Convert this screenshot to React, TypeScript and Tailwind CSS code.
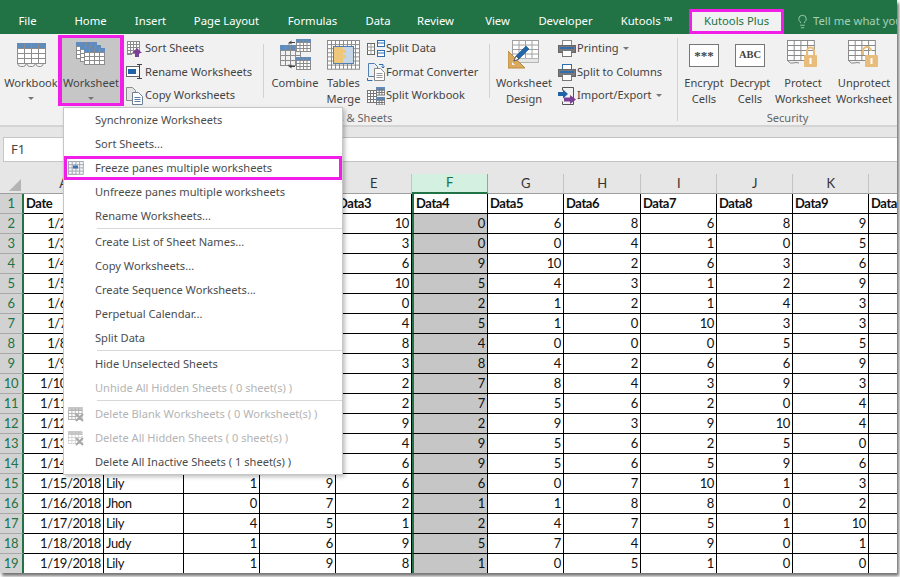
import type { ReactNode } from "react";
import { Lightbulb } from "lucide-react";

const BLUE = "#5f8bbd";
const GRID = "#8c8c8c";

// small table drawing used by most ribbon icons
function Tbl({ x, y, cw, rh, c, r, head = BLUE, line = GRID, fill = "#fff" }: {
  x: number; y: number; cw: number; rh: number; c: number; r: number; head?: string; line?: string; fill?: string;
}) {
  const w = cw * c;
  const h = rh * r;
  const parts: ReactNode[] = [];
  for (let i = 1; i < c; i++) parts.push(<path key={"c" + i} d={`M${x + i * cw} ${y}v${h}`} />);
  for (let i = 1; i < r; i++) parts.push(<path key={"r" + i} d={`M${x} ${y + i * rh}h${w}`} />);
  return (
    <g stroke={line} strokeWidth="1" fill="none">
      <rect x={x} y={y} width={w} height={h} fill={fill} />
      {head !== "none" && <rect x={x} y={y} width={w} height={rh} fill={head} stroke={head} />}
      {parts}
    </g>
  );
}

function WorkbookIcon() {
  return (
    <svg width="31" height="26" viewBox="0 0 31 26">
      <Tbl x={1.5} y={1.5} cw={7} rh={5} c={4} r={4} />
      <path d="M1.5 21.5q1 3 3 3h3q2 0 3-3q1 3 3 3h3q2 0 3-3q1 3 3 3h2q2 0 3-3" stroke={GRID} fill="none" />
    </svg>
  );
}
function WorksheetIcon() {
  return (
    <svg width="31" height="26" viewBox="0 0 31 26">
      <Tbl x={0.5} y={0.5} cw={5} rh={4} c={4} r={4} />
      <Tbl x={4.5} y={3.5} cw={5} rh={4} c={4} r={4} />
      <Tbl x={8.5} y={6.5} cw={5} rh={4} c={4} r={4} />
    </svg>
  );
}
function SortIcon() {
  return (
    <svg width="18" height="18" viewBox="0 0 18 18">
      <Tbl x={1.5} y={1.5} cw={3} rh={3} c={4} r={4} head="none" />
      <path d="M1 14.5h5" stroke={GRID} />
      <path d="M11 8l5 5h-3v4h-4v-4H6z" fill="#7b3f98" />
    </svg>
  );
}
function RenameIcon() {
  return (
    <svg width="18" height="16" viewBox="0 0 18 16">
      <rect x="0.5" y="2.5" width="13" height="10" fill="#fff" stroke="#666" />
      <rect x="2" y="5" width="8" height="5" fill="#1f62a8" />
      <path d="M11 .5h5M11 14.5h5M13.5 .5v14" stroke="#444" fill="none" />
    </svg>
  );
}
function CopyIcon() {
  return (
    <svg width="17" height="18" viewBox="0 0 17 18">
      <path d="M.5.5h6l3 3v10h-9z" fill="#e4e4e4" stroke="#8a8a8a" />
      <path d="M6.5 5.5h6l4 4v8h-10z" fill="#fff" stroke="#6f7f93" />
      <path d="M8.5 10.5h6M8.5 12.5h6M8.5 14.5h6" stroke="#5b7ea8" />
    </svg>
  );
}
function CombineIcon() {
  return (
    <svg width="31" height="32" viewBox="0 0 31 32">
      <Tbl x={0.5} y={6.5} cw={5} rh={5} c={4} r={4} fill="#f1f1f1" />
      <Tbl x={16.5} y={0.5} cw={3.5} rh={3} c={4} r={4} />
      <Tbl x={16.5} y={18.5} cw={3.5} rh={3} c={4} r={4} />
      <path d="M15 3.5H9v2M15 27.5H9v-2" stroke="#444" fill="none" />
      <path d="M9 3.5l2.5-2v4zM9 27.5l2.5-2v4z" fill="#444" />
    </svg>
  );
}
function MergeIcon() {
  return (
    <svg width="33" height="30" viewBox="0 0 33 30">
      <Tbl x={0.5} y={0.5} cw={4} rh={4.1} c={8} r={7} head="none" />
      <rect x="6.5" y="6.5" width="20" height="17" fill="#c4d6e8" stroke="#4f7fb5" />
      <path d="M7 7h9v3h3v3h-3v2h3v3h-3v5H7z" fill="#eec77a" />
    </svg>
  );
}
function SplitDataIcon() {
  return (
    <svg width="18" height="18" viewBox="0 0 18 18">
      <rect x=".5" y="3.5" width="7" height="11" fill="#fff" stroke="#666" />
      <path d="M.5 7h7M.5 10.5h7M4 3.5v11" stroke="#999" />
      <rect x="10.5" y=".5" width="7" height="6" fill="#fff" stroke="#2f6fb0" />
      <rect x="10.5" y="10.5" width="7" height="6" fill="#fff" stroke="#2f6fb0" />
      <path d="M10.5 3h7M10.5 13h7" stroke="#2f6fb0" />
    </svg>
  );
}
function FormatIcon() {
  return (
    <svg width="18" height="18" viewBox="0 0 18 18">
      <path d="M1.5 .5h6l3 3v10h-9z" fill="#e9eef5" stroke="#4f7fb5" />
      <path d="M7.5 5.5h6l4 4v8h-10z" fill="#fff" stroke="#888" />
      <path d="M9.5 10.5h6M9.5 12.5h6M9.5 14.5h6" stroke="#999" />
      <path d="M12 1.5h4v3M14.5 3.5l1.5 1.5 1.5-1.5M.5 15v2.5h5" stroke="#2f6fb0" fill="none" />
    </svg>
  );
}
function SplitBookIcon() {
  return (
    <svg width="18" height="18" viewBox="0 0 18 18">
      <Tbl x={.5} y={3.5} cw={3} rh={3} c={3} r={4} head="none" line="#777" />
      <Tbl x={9.5} y={.5} cw={2.7} rh={2.5} c={3} r={3} line="#777" />
      <Tbl x={9.5} y={10.5} cw={2.7} rh={2.5} c={3} r={3} line="#777" />
    </svg>
  );
}
function DesignIcon() {
  return (
    <svg width="33" height="30" viewBox="0 0 33 30">
      <Tbl x={4.5} y={0.5} cw={6.5} rh={4.5} c={4} r={4} head="none" line="#a0a0a0" />
      <path d="M4.5 18.5h26v4h-20" fill="#e6e6e6" stroke="#b5b5b5" />
      <path d="M0 11v17h17z" fill="#dba95e" stroke="#b98a3d" />
      <path d="M4 22v3h3z" fill="#f1f1f1" />
      <path d="M6 21l2-5L18 6l3 3-10 10z" fill="#2368ad" stroke="#174d85" strokeWidth=".6" />
      <path d="M6 21l2-5 3 3z" fill="#fff" stroke="#333" strokeWidth=".6" />
    </svg>
  );
}
function PrinterIcon({ top = "#888" }: { top?: string }) {
  return (
    <svg width="18" height="17" viewBox="0 0 18 17">
      <rect x="4.5" y=".5" width="9" height="5" fill="#fff" stroke={top} />
      <rect x=".5" y="5.5" width="17" height="7" fill="#7a7a7a" stroke="#666" />
      <rect x="2" y="7" width="14" height="2" fill="#2f6fb0" />
      <rect x="4.5" y="10.5" width="9" height="6" fill="#fff" stroke="#777" />
    </svg>
  );
}
function ImportIcon() {
  return (
    <svg width="18" height="18" viewBox="0 0 18 18">
      <path d="M4.5 3.5V.5h11v17h-11v-3" stroke="#555" fill="none" />
      <path d="M0 5h5V2.5L10 7l-5 4.5V9H0z" fill="#1f62a8" />
      <path d="M6 10.5h6V8l6 4.5-6 4.5v-2.5H6z" fill="#7b3f98" />
    </svg>
  );
}
function LockSheetIcon({ open }: { open?: boolean }) {
  return (
    <svg width="32" height="30" viewBox="0 0 32 30">
      <Tbl x={0.5} y={0.5} cw={6.7} rh={5} c={4} r={4} head="none" line="#8a8a8a" />
      <path d="M1 21q2 3 5 2t6 0" stroke="#8a8a8a" fill="none" />
      <rect x="17" y="15" width="13" height="12" rx="1" fill="#e8bd7c" />
      <path d={open ? "M15 15v-4a4 4 0 0 1 8 0" : "M20 15v-4a3.5 3.5 0 0 1 7 0v4"} stroke="#e8bd7c" strokeWidth="2" fill="none" />
      <rect x="22.5" y="18" width="2" height="6" fill="#fff" />
    </svg>
  );
}
function FreezeIcon() {
  return (
    <svg width="16" height="15" viewBox="0 0 16 15">
      <Tbl x={.5} y={.5} cw={3.7} rh={3.2} c={4} r={4} head="none" line="#a3a9b2" fill="#f4f6f9" />
      <rect x="5" y="4.5" width="5" height="3" fill="#3b73b5" />
      <path d="M1 13.5h8" stroke="#aaa" />
    </svg>
  );
}
function DeleteSheetIcon({ dotted }: { dotted?: boolean }) {
  return (
    <svg width="16" height="15" viewBox="0 0 16 15">
      <g strokeDasharray={dotted ? "1 1" : undefined}>
        <Tbl x={.5} y={.5} cw={3.4} rh={3} c={4} r={4} head="#c9c9c9" line="#b5b5b5" />
      </g>
      <path d="M8 7l7 7M15 7l-7 7" stroke="#a8a8a8" strokeWidth="2" />
    </svg>
  );
}

function LargeBtn({ w, icon, lines, caret }: { w: string; icon: ReactNode; lines: string[]; caret?: boolean }) {
  return (
    <div className={`flex ${w} shrink-0 flex-col items-center`}>
      <div className="flex h-[40px] items-center justify-center">{icon}</div>
      {lines.map((l) => (
        <span key={l} className="whitespace-nowrap text-[11.1px] leading-[16px]">{l}</span>
      ))}
      {caret && <span className="mt-[6px] h-0 w-0 border-x-[3px] border-t-[3px] border-x-transparent border-t-[#777]" />}
    </div>
  );
}

function SmallBtn({ icon, label, caret, iw }: { icon: ReactNode; label: string; caret?: boolean; iw: string }) {
  return (
    <div className="flex h-[23.5px] items-center whitespace-nowrap text-[11.1px]">
      <div className={`flex ${iw} shrink-0 items-center`}>{icon}</div>
      <span>{label}</span>
      {caret && <span className="ml-[4px] h-0 w-0 border-x-[3px] border-t-[3px] border-x-transparent border-t-[#777]" />}
    </div>
  );
}

const tabs = [
  { t: "File", c: "w-[61px] pr-[6px]" },
  { t: "Home", c: "w-[59px]" },
  { t: "Insert", c: "w-[61px]" },
  { t: "Page Layout", c: "w-[91px]" },
  { t: "Formulas", c: "w-[81px]" },
  { t: "Data", c: "w-[50px]" },
  { t: "Review", c: "w-[65px]" },
  { t: "View", c: "w-[59px]" },
  { t: "Developer", c: "w-[77px]" },
  { t: "Kutools ™", c: "w-[85px]" },
];

const menu: (string | { t: string; off?: boolean; icon?: ReactNode; hl?: boolean })[] = [
  { t: "Synchronize Worksheets" },
  { t: "Sort Sheets..." },
  { t: "Freeze panes multiple worksheets", icon: <FreezeIcon />, hl: true },
  { t: "Unfreeze panes multiple worksheets" },
  { t: "Rename Worksheets..." },
  "sep",
  { t: "Create List of Sheet Names..." },
  { t: "Copy Worksheets..." },
  { t: "Create Sequence Worksheets..." },
  { t: "Perpetual Calendar..." },
  { t: "Split Data" },
  "sep",
  { t: "Hide Unselected Sheets" },
  { t: "Unhide All Hidden Sheets ( 0 sheet(s) )", off: true },
  "sep",
  { t: "Delete Blank Worksheets ( 0 Worksheet(s) )", off: true, icon: <DeleteSheetIcon /> },
  { t: "Delete All Hidden Sheets ( 0 sheet(s) )", off: true, icon: <DeleteSheetIcon dotted /> },
  { t: "Delete All Inactive Sheets ( 1 sheet(s) )" },
];

const colWidths = ["w-[80px]", "w-[80px]", "w-[76px]", "w-[76px]", "w-[76px]", "w-[76px]", "w-[76px]", "w-[77px]", "w-[76px]", "w-[76px]", "w-[76px]", "w-[76px]"];
// B, C, D sit behind the menu and L is past the window edge, so they show no letter
const letters = ["A", "", "", "", "E", "F", "G", "H", "I", "J", "K", ""];
const head = ["Date", "", "", "", "Data3", "Data4", "Data5", "Data6", "Data7", "Data8", "Data9", "Data10"];

// E..K for rows 2-14, C..K for rows 15-19
const nums = [
  [10, 0, 6, 8, 6, 8, 9], [3, 0, 0, 4, 1, 0, 5], [6, 9, 10, 2, 6, 3, 6], [10, 5, 4, 3, 1, 2, 9],
  [0, 2, 1, 2, 1, 4, 3], [4, 5, 1, 0, 10, 3, 3], [8, 4, 0, 0, 0, 5, 5], [3, 8, 4, 2, 6, 6, 9],
  [2, 7, 8, 4, 3, 9, 3], [2, 7, 5, 6, 2, 0, 4], [9, 2, 9, 3, 9, 10, 4], [4, 9, 5, 6, 2, 5, 0],
  [6, 9, 5, 6, 5, 9, 6],
  [1, 9, 6, 6, 0, 7, 10, 1, 3], [0, 7, 2, 1, 1, 8, 8, 0, 2], [4, 5, 1, 2, 4, 7, 5, 1, 10],
  [1, 6, 9, 5, 7, 4, 9, 0, 1], [1, 9, 8, 1, 0, 5, 1, 0, 0],
];
const names: Record<number, string> = { 15: "Lily", 16: "Jhon", 17: "Lily", 18: "Judy", 19: "Lily" };

function rowCells(row: number): (string | number)[] {
  const v = nums[row - 2];
  const date = `1/${row}/2018`;
  if (row >= 15) return [date, names[row], ...v, ""];
  return [date, "", "", "", ...v, ""];
}

function Sheet() {
  return (
    <div className="font-['Lato',sans-serif] text-[13px] tracking-[-0.4px] text-[#111]">
      <div className="flex h-[20px]">
        <div className="flex w-[24px] shrink-0 items-end justify-end border-b border-[#9e9e9e] bg-[#e6e6e6] pb-[2px] pr-[3px]">
          <span className="h-0 w-0 border-b-[12px] border-l-[12px] border-b-[#b4b4b4] border-l-transparent" />
        </div>
        {letters.map((l, i) => (
          <div
            key={i}
            className={`flex ${colWidths[i]} shrink-0 items-center justify-center border-b border-r ${
              l === "F" ? "border-b-2 border-b-[#217346] border-r-[#9e9e9e] bg-[#d3f0e0] text-[#217346]" : "border-b-[#9e9e9e] border-r-[#c4c4c4] bg-[#e6e6e6] text-[#333]"
            }`}
          >
            {l}
          </div>
        ))}
      </div>
      <div className="flex h-[20px]">
        <RowNum n={1} />
        {head.map((h, i) => (
          <Cell key={i} i={i} bold first value={h} />
        ))}
      </div>
      {Array.from({ length: 18 }, (_, k) => k + 2).map((row) => (
        <div key={row} className="flex h-[20px]">
          <RowNum n={row} />
          {rowCells(row).map((v, i) => (
            <Cell key={i} i={i} value={v} />
          ))}
        </div>
      ))}
    </div>
  );
}

function RowNum({ n }: { n: number }) {
  return (
    <div className="flex w-[24px] shrink-0 items-center justify-center border-b border-r-2 border-b-[#a8a8a8] border-r-[#217346] bg-[#d2d2d2] text-[#217346]">
      {n}
    </div>
  );
}

function Cell({ i, value, bold, first }: { i: number; value: string | number; bold?: boolean; first?: boolean }) {
  const sel = i === 5;
  const left = bold || i === 1;
  return (
    <div
      className={`flex ${colWidths[i]} shrink-0 items-center overflow-hidden whitespace-nowrap border-b border-r border-b-black border-r-black ${
        left ? "justify-start pl-[2px]" : "justify-end pr-[2px]"
      } ${bold ? "font-bold" : ""} ${
        sel ? "border-x-2 border-x-[#217346]" : ""
      } ${sel && !first ? "border-b-[#6f6f6f] bg-[#c6c6c6]" : "bg-white"}`}
    >
      {value}
    </div>
  );
}

export default function App() {
  return (
    <div className="h-[577px] w-[900px] overflow-hidden bg-white font-['Noto_Sans',sans-serif] text-[#444]">
      <div className="h-[573px] w-[897px] overflow-hidden bg-[#e6e6e6] shadow-[2px_3px_3px_rgba(0,0,0,0.55)]">
        {/* tabs */}
        <div className="flex h-[34px] items-end bg-[#217346] pt-[9px] text-[11.3px] text-white">
          {tabs.map((t) => (
            <div key={t.t} className={`flex h-[25px] shrink-0 items-center justify-center whitespace-nowrap ${t.c}`}>{t.t}</div>
          ))}
          <div className="flex h-[25px] w-[95px] shrink-0 items-center justify-center border-[3px] border-[#f01ee6] bg-[#f1f1f1] text-[#217346]">
            Kutools Plus
          </div>
          <div className="ml-[11px] flex h-[25px] min-w-0 flex-1 items-center gap-[3px] overflow-hidden whitespace-nowrap text-[#a6d0b8]">
            <Lightbulb className="shrink-0" size={15} strokeWidth={1.4} />
            <span>Tell me what you want to do</span>
          </div>
        </div>

        {/* ribbon */}
        <div className="flex h-[93px] border-b-2 border-[#d4d4d4] bg-[#f1f1f1]">
          <div className="my-[4px] flex w-[678px] shrink-0 flex-col border-r border-[#d2d2d2]">
            <div className="-mt-[3px] flex h-[75px] shrink-0">
              <LargeBtn w="w-[58px] pl-[4px]" icon={<WorkbookIcon />} lines={["Workbook"]} caret />
              <div className="h-[71px] w-[66px] shrink-0 border-[3px] border-x-4 border-[#f01ee6] bg-[#c6c6c6]">
                <div className="-mt-[3px]">
                  <LargeBtn w="w-full" icon={<WorksheetIcon />} lines={["Worksheet"]} caret />
                </div>
              </div>
              <div className="w-[139px] shrink-0 pl-[2px] pt-[2px]">
                <SmallBtn iw="w-[19px]" icon={<SortIcon />} label="Sort Sheets" />
                <SmallBtn iw="w-[19px]" icon={<RenameIcon />} label="Rename Worksheets" />
                <SmallBtn iw="w-[19px]" icon={<CopyIcon />} label="Copy Worksheets" />
              </div>
              <div className="mt-[9px] h-[54px] w-px shrink-0 bg-[#d2d2d2]" />
              <LargeBtn w="w-[62px]" icon={<CombineIcon />} lines={["Combine"]} />
              <LargeBtn w="w-[35px]" icon={<MergeIcon />} lines={["Tables", "Merge"]} />
              <div className="w-[128px] shrink-0 pl-[6px] pt-[2px]">
                <SmallBtn iw="w-[19px]" icon={<SplitDataIcon />} label="Split Data" />
                <SmallBtn iw="w-[19px]" icon={<FormatIcon />} label="Format Converter" />
                <SmallBtn iw="w-[19px]" icon={<SplitBookIcon />} label="Split Workbook" />
              </div>
              <div className="mt-[9px] h-[54px] w-px shrink-0 bg-[#d2d2d2]" />
              <LargeBtn w="w-[68px]" icon={<DesignIcon />} lines={["Worksheet", "Design"]} />
              <div className="pt-[2px]">
                <SmallBtn iw="w-[19px]" icon={<PrinterIcon />} label="Printing" caret />
                <SmallBtn iw="w-[19px]" icon={<PrinterIcon top="#2f6fb0" />} label="Split to Columns" />
                <SmallBtn iw="w-[19px]" icon={<ImportIcon />} label="Import/Export" caret />
              </div>
            </div>
            <div className="text-center text-[11.1px] leading-[16px] text-[#666]">Workbooks &amp; Sheets</div>
          </div>
          <div className="my-[4px] flex flex-1 flex-col">
            <div className="-mt-[3px] flex h-[75px] shrink-0 pl-[3px]">
              <LargeBtn
                w="w-[46px]"
                icon={<div className="flex h-[23px] w-[30px] items-center justify-center border border-[#777] bg-white pt-[2px] font-['Liberation_Serif',serif] text-[13px] font-bold">***</div>}
                lines={["Encrypt", "Cells"]}
              />
              <LargeBtn
                w="w-[46px]"
                icon={<div className="flex h-[23px] w-[30px] items-center justify-center border border-[#777] bg-white font-['Liberation_Serif',serif] text-[10.5px] font-bold">ABC</div>}
                lines={["Decrypt", "Cells"]}
              />
              <LargeBtn w="w-[60px]" icon={<LockSheetIcon />} lines={["Protect", "Worksheet"]} />
              <LargeBtn w="w-[62px]" icon={<LockSheetIcon open />} lines={["Unprotect", "Worksheet"]} />
            </div>
            <div className="text-center text-[11.1px] leading-[16px] text-[#666]">Security</div>
          </div>
        </div>

        {/* formula bar */}
        <div className="flex h-[47px] items-start bg-[#e6e6e6] pl-[3px] pt-[10px]">
          <div className="flex h-[25px] w-[120px] items-center border border-[#c6c6c6] bg-white pl-[7px] text-[13px]">F1</div>
          <div className="ml-[60px] h-[25px] flex-1 border-y border-[#c2c2c2] bg-white" />
        </div>

        <Sheet />
      </div>

      {/* Worksheet dropdown */}
      <div className="absolute left-[63px] top-[107px] w-[280px] border border-[#c6c6c6] bg-white text-[11.1px] text-[#4c4c4c] shadow-[2px_2px_4px_rgba(0,0,0,0.25)]">
        {menu.map((m, i) =>
          typeof m === "string" ? (
            <div key={i} className="ml-[33px] h-[2px] border-t border-[#d8d8d8]" />
          ) : (
            <div
              key={m.t}
              className={`flex h-[24px] items-center ${m.hl ? "border-[3px] border-[#f01ee6]" : ""} ${m.off ? "text-[#b4b4b4]" : ""}`}
            >
              <div className={`flex shrink-0 items-center ${m.hl ? "w-[28px] pl-px" : "w-[31px] pl-[4px]"}`}>{m.icon}</div>
              <span className="whitespace-nowrap">{m.t}</span>
            </div>
          ),
        )}
      </div>
    </div>
  );
}
